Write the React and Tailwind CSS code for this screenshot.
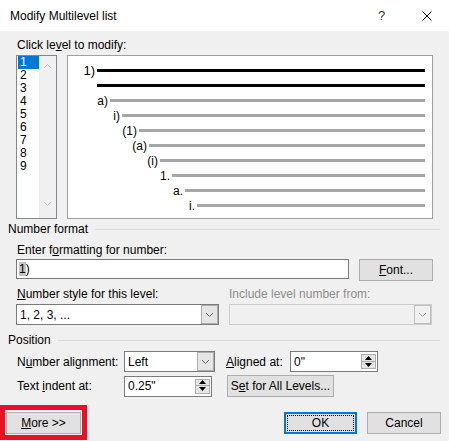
import React from 'react';

const previewRows = [
  { label: '1)', w: 'w-[29px]', line: 'bg-black', text: 'text-[13px]' },
  { label: '', w: 'w-[29px]', line: 'bg-black', text: 'text-[12px]' },
  { label: 'a)', w: 'w-[42px]', line: 'bg-[#a6a6a6]', text: 'text-[12px]' },
  { label: 'i)', w: 'w-[54px]', line: 'bg-[#a6a6a6]', text: 'text-[12px]' },
  { label: '(1)', w: 'w-[71px]', line: 'bg-[#a6a6a6]', text: 'text-[12px]' },
  { label: '(a)', w: 'w-[81px]', line: 'bg-[#a6a6a6]', text: 'text-[12px]' },
  { label: '(i)', w: 'w-[92px]', line: 'bg-[#a6a6a6]', text: 'text-[12px]' },
  { label: '1.', w: 'w-[104px]', line: 'bg-[#a6a6a6]', text: 'text-[12px]' },
  { label: 'a.', w: 'w-[117px]', line: 'bg-[#a6a6a6]', text: 'text-[12px]' },
  { label: 'i.', w: 'w-[129px]', line: 'bg-[#a6a6a6]', text: 'text-[12px]' },
];

const levels = ['1', '2', '3', '4', '5', '6', '7', '8', '9'];

const Chevron = ({ up = false, color = '#606060' }) => (
  <svg width="9" height="6" viewBox="0 0 9 6" className="block">
    <path d={up ? 'M1 5 L4.5 1.5 L8 5' : 'M1 1 L4.5 4.5 L8 1'} fill="none" stroke={color} strokeWidth="1" />
  </svg>
);

const Select = ({ value, disabled, className }) => (
  <div className={`flex h-[21px] border ${disabled ? 'border-[#cccccc] bg-[#f0f0f0]' : 'border-[#7a7a7a] bg-white'} ${className}`}>
    <div className="flex-1 flex items-center pl-[3px] whitespace-nowrap">{value}</div>
    <div className={`w-[17px] flex items-center justify-center border ${disabled ? 'border-[#bfbfbf] bg-[#f0f0f0]' : 'border-[#adadad] bg-[#e5e5e5]'}`}>
      <Chevron color={disabled ? '#a0a0a0' : '#606060'} />
    </div>
  </div>
);

const Spin = ({ value, className }) => (
  <div className={`flex h-[21px] border border-[#7a7a7a] bg-white ${className}`}>
    <div className="flex-1 flex items-center pl-[3px]">{value}</div>
    <div className="w-[16px] flex flex-col justify-center py-[2px] pr-[1px]">
      <div className="h-[8px] border border-[#adadad] bg-[#e5e5e5] flex items-center justify-center">
        <svg width="7" height="4" viewBox="0 0 7 4"><path d="M0 4 L3.5 0 L7 4 Z" fill="#000" /></svg>
      </div>
      <div className="h-[8px] border border-t-0 border-[#adadad] bg-[#e5e5e5] flex items-center justify-center">
        <svg width="7" height="4" viewBox="0 0 7 4"><path d="M0 0 L3.5 4 L7 0 Z" fill="#000" /></svg>
      </div>
    </div>
  </div>
);

const Btn = ({ children, className }) => (
  <button className={`h-[22px] border border-[#adadad] bg-[#e1e1e1] flex items-center justify-center whitespace-nowrap ${className}`}>
    {children}
  </button>
);

const GroupLabel = ({ children }) => (
  <div className="flex items-center h-[14px] pl-[8px] pr-[9px] gap-[7px]">
    <span>{children}</span>
    <div className="flex-1 h-px bg-[#dcdcdc]" />
  </div>
);

export default function App() {
  return (
    <div className="w-[449px] h-[441px] bg-[#f0f0f0] overflow-hidden text-[12px] leading-[14px] text-black font-['Liberation_Sans',Arial,sans-serif]">
      {/* title bar */}
      <div className="h-[31px] bg-white flex items-center pl-[10px]">
        <span className="flex-1">Modify Multilevel list</span>
        <span className="w-[10px] mr-[19px] text-[13px] text-[#333]">?</span>
        <div className="w-[42px] flex justify-center pr-[2px]">
          <svg width="10" height="10" viewBox="0 0 10 10"><path d="M0.5 0.5 L9.5 9.5 M9.5 0.5 L0.5 9.5" stroke="#000" strokeWidth="1" /></svg>
        </div>
      </div>

      <div className="pt-[7px] pl-[17px]">Click le<u>v</u>el to modify:</div>

      <div className="flex gap-[10px] pl-[16px] mt-[3px]">
        {/* level list */}
        <div className="w-[41px] h-[164px] border border-[#828790] bg-white flex">
          <div className="flex-1 pl-[1px]">
            {levels.map((l, i) => (
              <div key={l} className={`h-[13px] leading-[13px] pl-[2px] ${i === 0 ? 'bg-[#0078d7] text-white' : ''}`}>{l}</div>
            ))}
          </div>
          <div className="w-[17px] bg-[#f0f0f0] flex flex-col items-center justify-between pt-[7px] pb-[11px]">
            <Chevron up color="#c2c2c2" />
            <Chevron color="#c2c2c2" />
          </div>
        </div>

        {/* preview */}
        <div className="w-[366px] h-[164px] border border-[#a0a0a0] bg-white pt-[7px] pr-[7px]">
          {previewRows.map((r, i) => (
            <div key={i} className="flex items-center h-[15px]">
              <span className={`${r.w} ${r.text} shrink-0 text-right pr-[2px] leading-none`}>{r.label}</span>
              <div className={`flex-1 h-[3px] ${r.line}`} />
            </div>
          ))}
        </div>
      </div>

      <div className="mt-[3px]">
        <GroupLabel>Number format</GroupLabel>
      </div>

      <div className="pl-[17px] mt-[7px]">Enter f<u>o</u>rmatting for number:</div>
      <div className="flex pl-[16px] mt-[2px] gap-[10px]">
        <div className="w-[333px] h-[20px] border border-[#7a7a7a] bg-white flex items-center pl-[2px]">
          <span className="bg-[#c4c4c4]">1</span>)
        </div>
        <Btn className="w-[74px] h-[21px]"><u>F</u>ont...</Btn>
      </div>

      <div className="flex pl-[17px] mt-[6px]">
        <div className="w-[212px]"><u>N</u>umber style for this level:</div>
        <div className="text-[#8d8d8d]">Include level number from:</div>
      </div>
      <div className="flex pl-[16px] mt-[3px] gap-[10px]">
        <Select value="1, 2, 3, ..." className="w-[203px]" />
        <Select value="" disabled className="w-[203px]" />
      </div>

      <div className="mt-[8px]">
        <GroupLabel>Position</GroupLabel>
      </div>

      <div className="flex items-center pl-[17px] mt-[4px]">
        <div className="w-[107px] whitespace-nowrap">N<u>u</u>mber alignment:</div>
        <Select value="Left" className="w-[91px]" />
        <div className="w-[75px] pl-[11px] whitespace-nowrap"><u>A</u>ligned at:</div>
        <Spin value={'0"'} className="w-[88px]" />
      </div>

      <div className="flex items-center pl-[17px] mt-[3px]">
        <div className="w-[107px] whitespace-nowrap">Text <u>i</u>ndent at:</div>
        <Spin value={'0.25"'} className="w-[88px]" />
        <div className="pl-[15px]">
          <Btn className="w-[107px]">S<u>e</u>t for All Levels...</Btn>
        </div>
      </div>

      <div className="flex items-center mt-[8px]">
        <div className="w-[87px] h-[35px] border-[5px] border-[#e81123] flex items-center pl-px">
          <Btn className="w-[75px]"><u>M</u>ore &gt;&gt;</Btn>
        </div>
        <div className="flex-1 flex justify-end gap-[10px] pr-[8px]">
          <button className="w-[73px] h-[22px] border-2 border-[#0078d7] bg-[#e1e1e1] p-px">
            <div className="w-full h-full border border-dotted border-black flex items-center justify-center">OK</div>
          </button>
          <Btn className="w-[74px]">Cancel</Btn>
        </div>
      </div>
    </div>
  );
}
